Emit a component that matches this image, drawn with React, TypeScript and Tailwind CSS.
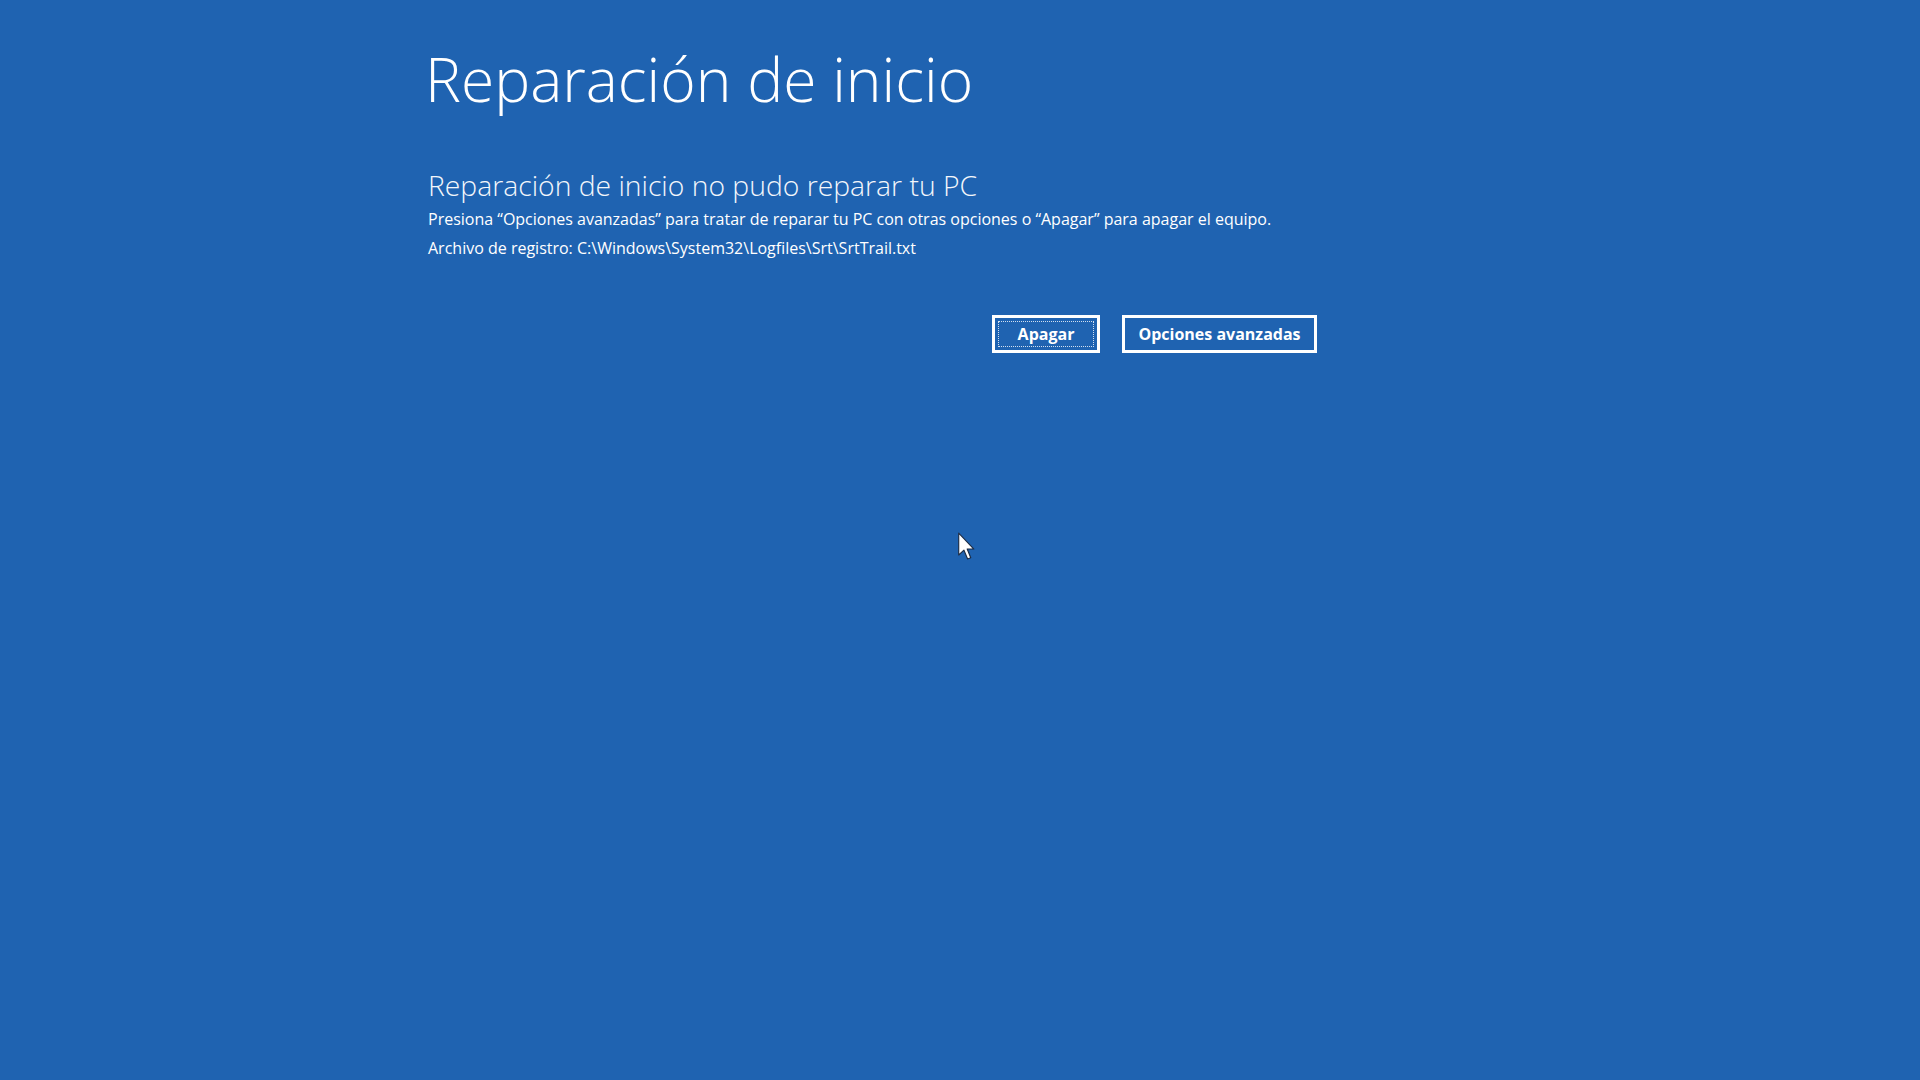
export default function App() {
  return (
    <div className="relative min-h-screen w-full overflow-hidden bg-[#1f63b1] font-['Open_Sans',sans-serif] text-white">
      <div className="pl-[428px] pt-[49px]">
        {/* Título */}
        <h1 className="-ml-[3px] text-[60.5px] font-light leading-none">Reparación de inicio</h1>

        {/* Mensaje */}
        <h2 className="mt-[61px] text-[28.3px] font-light leading-none text-[#f3f6fb]">
          Reparación de inicio no pudo reparar tu PC
        </h2>
        <div className="mt-[6px] text-[16px] leading-[29px]">
          <p>Presiona “Opciones avanzadas” para tratar de reparar tu PC con otras opciones o “Apagar” para apagar el equipo.</p>
          <p>Archivo de registro: C:\Windows\System32\Logfiles\Srt\SrtTrail.txt</p>
        </div>

        {/* Botones */}
        <div className="mt-[52px] flex w-[889px] justify-end gap-[22px]">
          <button
            type="button"
            className="h-[38px] w-[108px] border-[3px] border-white text-[16px] font-bold outline-1 outline-offset-[-7px] outline-white/80 outline-dotted"
          >
            Apagar
          </button>
          <button
            type="button"
            className="h-[38px] w-[195px] border-[3px] border-white text-[16px] font-bold"
          >
            Opciones avanzadas
          </button>
        </div>
      </div>

      {/* Puntero del ratón */}
      <svg
        className="absolute left-[958px] top-[532px]"
        width="17"
        height="29"
        viewBox="0 0 12 20"
      >
        <path
          d="M0.5 0.5 L0.5 16 L4.2 12.6 L6.8 18.8 L9 17.9 L6.5 11.8 L11.2 11.8 Z"
          fill="white"
          stroke="#1a2a44"
          strokeWidth="0.8"
          strokeLinejoin="round"
        />
      </svg>
    </div>
  )
}
